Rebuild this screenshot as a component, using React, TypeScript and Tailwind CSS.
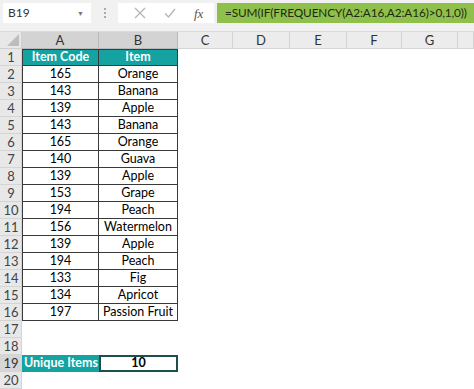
import React from 'react';

const rows: [string, string][] = [
  ['165', 'Orange'],
  ['143', 'Banana'],
  ['139', 'Apple'],
  ['143', 'Banana'],
  ['165', 'Orange'],
  ['140', 'Guava'],
  ['139', 'Apple'],
  ['153', 'Grape'],
  ['194', 'Peach'],
  ['156', 'Watermelon'],
  ['139', 'Apple'],
  ['194', 'Peach'],
  ['133', 'Fig'],
  ['134', 'Apricot'],
  ['197', 'Passion Fruit'],
];

const cols = ['A', 'B', 'C', 'D', 'E', 'F', 'G', ''];

const RowHead = ({ n, dark }: { n: number; dark?: boolean }) => (
  <div
    className={`h-[17px] border-r border-b border-[#d4d4d4] flex items-center justify-center pl-[1px] text-[13px] ${
      dark ? 'bg-[#d6d6d6] text-[#333]' : 'bg-[#e8e8e8] text-[#444]'
    }`}
  >
    {n}
  </div>
);

const Empty = ({ count }: { count: number }) => (
  <>
    {Array.from({ length: count }).map((_, i) => (
      <div key={i} className="h-[17px] bg-white" />
    ))}
  </>
);

const App: React.FC = () => {
  return (
    <div className="w-[474px] h-[389px] overflow-hidden bg-white text-[12.5px] leading-none text-black" style={{ fontFamily: 'Lato, "Open Sans", sans-serif' }}>
      {/* Formula bar */}
      <div className="h-[32px] bg-[#f1f1f1] border-b border-[#dcdcdc] flex pt-[3px]">
        <div className="ml-[3px] w-[88px] h-[20px] bg-white flex items-center justify-between px-[5px]">
          <span className="text-[12px] text-[#333]">B19</span>
          <span className="text-[7px] text-[#777] mr-[2px]">▼</span>
        </div>
        <div className="w-[27px] h-[20px] flex flex-col items-center justify-center gap-[2px]">
          <span className="w-[2px] h-[2px] bg-[#aaa]" />
          <span className="w-[2px] h-[2px] bg-[#aaa]" />
          <span className="w-[2px] h-[2px] bg-[#aaa]" />
        </div>
        <div className="w-[96px] h-[20px] bg-white flex items-center">
          <svg width="12" height="12" viewBox="0 0 12 12" className="ml-[16px]">
            <path d="M1 1L11 11M11 1L1 11" stroke="#b5b5b5" strokeWidth="1.3" />
          </svg>
          <svg width="12" height="12" viewBox="0 0 12 12" className="ml-[18px]">
            <path d="M1 6.5L4.5 10L11 2" stroke="#b5b5b5" strokeWidth="1.3" fill="none" />
          </svg>
          <span className="ml-[18px] text-[13px] italic text-[#555]" style={{ fontFamily: '"Liberation Serif", serif' }}>fx</span>
        </div>
        <div className="ml-[3px] flex-1 h-[20px] bg-[#8fc04c] flex items-center pl-[8px] text-[11.8px] tracking-[-0.1px] text-[#1e2a10] whitespace-nowrap">
          =SUM(IF(FREQUENCY(A2:A16,A2:A16)&gt;0,1,0))
        </div>
      </div>

      <div className="grid grid-cols-[22px_77px_79px_55px_57px_57px_55px_56px_1fr]">
        {/* Column headers */}
        <div className="h-[17px] bg-[#e8e8e8] border-r border-b border-[#cfcfcf] relative">
          <svg width="12" height="12" viewBox="0 0 12 12" className="absolute right-[2px] bottom-[2px]">
            <path d="M12 0L12 12L0 12Z" fill="#bdbdbd" />
          </svg>
        </div>
        {cols.map((c, i) => (
          <div
            key={i}
            className={`h-[17px] border-r border-b flex items-center justify-center text-[13px] text-[#333] ${
              i < 2 ? 'bg-[#d3d3d3] border-[#b8b8b8]' : 'bg-[#ececec] border-[#d4d4d4]'
            }`}
          >
            {c}
          </div>
        ))}

        {/* Row 1 */}
        <RowHead n={1} />
        <div className="h-[17px] bg-[#14a3a0] text-white font-bold flex items-center justify-center border border-[#3a3a3a]">Item Code</div>
        <div className="h-[17px] bg-[#14a3a0] text-white font-bold flex items-center justify-center border-y border-r border-[#3a3a3a]">Item</div>
        <Empty count={6} />

        {rows.map(([code, item], i) => (
          <React.Fragment key={i}>
            <RowHead n={i + 2} />
            <div className="h-[17px] flex items-center justify-center border-x border-b border-[#3a3a3a]">{code}</div>
            <div className="h-[17px] flex items-center justify-center border-r border-b border-[#3a3a3a]">{item}</div>
            <Empty count={6} />
          </React.Fragment>
        ))}

        <RowHead n={17} />
        <Empty count={8} />
        <RowHead n={18} />
        <Empty count={8} />

        <RowHead n={19} dark />
        <div className="h-[17px] bg-[#14a3a0] text-white font-bold flex items-center pl-[2px] whitespace-nowrap">Unique Items</div>
        <div className="h-[17px] bg-white font-bold flex items-center justify-center border-2 border-[#1f4f4d]">10</div>
        <Empty count={6} />

        <RowHead n={20} />
        <Empty count={8} />
      </div>
    </div>
  );
};

export default App;
